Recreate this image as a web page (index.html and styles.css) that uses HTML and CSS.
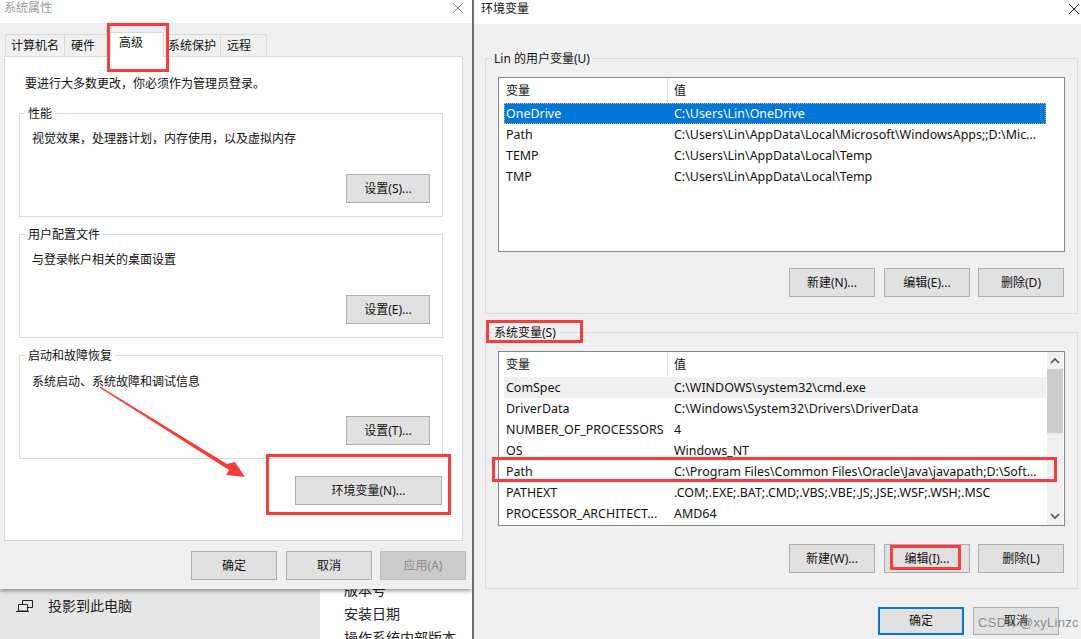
FILE: index.html
```html
<!DOCTYPE html>
<html lang="zh">
<head>
<meta charset="utf-8">
<title>环境变量</title>
<link rel="stylesheet" href="styles.css">
</head>
<body>
<div class="desktop">
  <div class="nav-pane">
    <div class="nav-item">
      <svg class="nav-icon" width="17" height="13" viewBox="0 0 17 13"><path d="M6.5 4V.5h10v7h-5M2.5 4.5h9v6.5h-9zM0 11.5h13" fill="none" stroke="#222" stroke-width="1"/></svg>
      <span>投影到此电脑</span>
    </div>
  </div>
  <div class="info-pane">
    <div class="info-line">版本号</div>
    <div class="info-line">安装日期</div>
    <div class="info-line">操作系统内部版本</div>
  </div>

  <section class="window window-props">
    <header class="titlebar titlebar-dim">
      <span>系统属性</span>
      <svg class="close" width="12" height="12" viewBox="0 0 12 12"><path d="M1 1l10 10M11 1L1 11" stroke="#8c8c8c" fill="none"/></svg>
    </header>
    <div class="props-body">
      <nav class="tabs">
        <div class="tab tab-a">计算机名</div>
        <div class="tab tab-b">硬件</div>
        <div class="tab tab-c tab-active">高级</div>
        <div class="tab tab-d">系统保护</div>
        <div class="tab tab-b">远程</div>
      </nav>
      <div class="page">
        <p class="note">要进行大多数更改，你必须作为管理员登录。</p>
        <fieldset class="group">
          <legend>性能</legend>
          <p class="group-text">视觉效果，处理器计划，内存使用，以及虚拟内存</p>
          <button class="btn btn-set">设置(S)...</button>
        </fieldset>
        <fieldset class="group">
          <legend>用户配置文件</legend>
          <p class="group-text">与登录帐户相关的桌面设置</p>
          <button class="btn btn-set">设置(E)...</button>
        </fieldset>
        <fieldset class="group group-last">
          <legend>启动和故障恢复</legend>
          <p class="group-text">系统启动、系统故障和调试信息</p>
          <button class="btn btn-set">设置(T)...</button>
        </fieldset>
        <button class="btn btn-env">环境变量(N)...</button>
      </div>
      <footer class="props-footer">
        <button class="btn">确定</button>
        <button class="btn">取消</button>
        <button class="btn btn-disabled">应用(A)</button>
      </footer>
    </div>
  </section>

  <section class="window window-env">
    <header class="titlebar titlebar-env">
      <span>环境变量</span>
      <svg class="close" width="12" height="12" viewBox="0 0 12 12"><path d="M1 1l10 10M11 1L1 11" stroke="#222" fill="none"/></svg>
    </header>
    <div class="env-body">
      <fieldset class="env-group env-user">
        <legend>Lin 的用户变量(U)</legend>
        <div class="list">
          <div class="list-main">
            <div class="row row-head"><span class="c1">变量</span><span class="c2">值</span></div>
            <div class="row row-selected"><span class="c1">OneDrive</span><span class="c2">C:\Users\Lin\OneDrive</span></div>
            <div class="row"><span class="c1">Path</span><span class="c2">C:\Users\Lin\AppData\Local\Microsoft\WindowsApps;;D:\Mic...</span></div>
            <div class="row"><span class="c1">TEMP</span><span class="c2">C:\Users\Lin\AppData\Local\Temp</span></div>
            <div class="row"><span class="c1">TMP</span><span class="c2">C:\Users\Lin\AppData\Local\Temp</span></div>
          </div>
          <div class="scroll-slot"></div>
        </div>
        <div class="actions">
          <button class="btn">新建(N)...</button>
          <button class="btn">编辑(E)...</button>
          <button class="btn">删除(D)</button>
        </div>
      </fieldset>
      <fieldset class="env-group env-system">
        <legend>系统变量(S)</legend>
        <div class="list">
          <div class="list-main">
            <div class="row row-head"><span class="c1">变量</span><span class="c2">值</span></div>
            <div class="row row-shaded"><span class="c1">ComSpec</span><span class="c2">C:\WINDOWS\system32\cmd.exe</span></div>
            <div class="row"><span class="c1">DriverData</span><span class="c2">C:\Windows\System32\Drivers\DriverData</span></div>
            <div class="row"><span class="c1">NUMBER_OF_PROCESSORS</span><span class="c2">4</span></div>
            <div class="row"><span class="c1">OS</span><span class="c2">Windows_NT</span></div>
            <div class="row"><span class="c1">Path</span><span class="c2">C:\Program Files\Common Files\Oracle\Java\javapath;D:\Soft...</span></div>
            <div class="row"><span class="c1">PATHEXT</span><span class="c2">.COM;.EXE;.BAT;.CMD;.VBS;.VBE;.JS;.JSE;.WSF;.WSH;.MSC</span></div>
            <div class="row"><span class="c1">PROCESSOR_ARCHITECT...</span><span class="c2">AMD64</span></div>
          </div>
          <div class="scroll-slot scrollbar">
            <svg class="chevron" width="16" height="17" viewBox="0 0 16 17"><path d="M4 11l4-4 4 4" fill="none" stroke="#505050" stroke-width="1.6"/></svg>
            <div class="thumb"></div>
            <svg class="chevron" width="16" height="17" viewBox="0 0 16 17"><path d="M4 6l4 4 4-4" fill="none" stroke="#505050" stroke-width="1.6"/></svg>
          </div>
        </div>
        <div class="actions">
          <button class="btn">新建(W)...</button>
          <button class="btn">编辑(I)...</button>
          <button class="btn">删除(L)</button>
        </div>
      </fieldset>
      <footer class="env-footer">
        <button class="btn btn-default">确定</button>
        <button class="btn">取消</button>
      </footer>
    </div>
  </section>

  <svg class="arrow" width="160" height="100" viewBox="0 0 160 100"><polygon points="0,7 1,7 127,84 135,82 145,97 126,95 129,90 0,8" fill="#f73c3c"/></svg>
  <div class="mark mark-tab"></div>
  <div class="mark mark-env"></div>
  <div class="mark mark-legend"></div>
  <div class="mark mark-path"></div>
  <div class="mark mark-edit"></div>
  <div class="watermark">CSDN @xyLinzc</div>
</div>
</body>
</html>
```
FILE: styles.css
```css
* { box-sizing: border-box; }
html, body { margin: 0; padding: 0; }
body { font-family: "Noto Sans", "Noto Sans CJK SC", sans-serif; font-size: 12px; line-height: 16px; color: #111; }
p { margin: 0; }

.desktop { position: relative; display: flex; width: 1081px; height: 639px; overflow: hidden; background: #fff; }
.nav-pane { width: 320px; background: #e6e6e6; padding: 594px 0 0 16px; }
.nav-item { display: flex; align-items: center; gap: 15px; font-size: 14px; line-height: 24px; height: 24px; color: #222; }
.nav-icon { flex: none; }
.info-pane { flex: 1; padding: 578px 0 0 24px; font-size: 14px; line-height: 24px; color: #222; }

.window { position: absolute; top: 0; height: 100%; }
.window-props { left: 0; width: 472px; height: 589px; box-shadow: 0 1px 5px rgba(0, 0, 0, .55); background: #f0f0f0; }
.window-env { left: 472px; width: 609px; border-left: 2px solid #6e6e6e; background: #f0f0f0; }

.titlebar { display: flex; align-items: center; justify-content: space-between; background: #fff; }
.titlebar-dim { height: 23px; padding: 0 8px 7px 4px; color: #9a9a9a; }
.titlebar-env { height: 24px; padding: 0 1px 7px 7px; color: #111; }

.props-body { padding: 11px 9px 0 4px; }
.tabs { display: flex; align-items: flex-end; height: 22px; padding-left: 1px; }
.tab { height: 22px; border: 1px solid #d9d9d9; border-bottom: 0; margin-right: -1px; background: #f0f0f0; line-height: 21px; padding-left: 6px; }
.tab-a { width: 60px; padding-left: 5px; }
.tab-b { width: 47px; }
.tab-c { width: 54px; }
.tab-d { width: 58px; padding-left: 4px; }
.tab-active { position: relative; height: 25px; margin-bottom: -1px; background: #fff; line-height: 20px; padding-left: 8px; z-index: 1; }

.page { display: flex; flex-direction: column; height: 485px; padding: 19px 20px 0 14px; border: 1px solid #d9d9d9; background: #fff; }
.note { margin-left: 6px; margin-bottom: 12px; }

.group { display: flex; flex-direction: column; width: 424px; height: 113px; margin: 0 0 8px; padding: 9px 12px 0; border: 1px solid #dcdcdc; }
.group legend { padding: 2px 3px 0; margin-left: -7px; }
.group-text { height: 16px; }
.group-last .group-text { margin-top: 1px; }
.group-last .btn-set { margin-top: 26px; }

.btn { height: 29px; padding: 0; border: 1px solid #adadad; background: #e1e1e1; font: inherit; color: #111; width: 86px; }
.btn-set { align-self: flex-end; width: 84px; margin-top: 27px; }
.btn-env { align-self: flex-end; width: 147px; margin-top: 9px; }
.btn-disabled { margin-left: -1px; background: #cccccc; border-color: #bfbfbf; color: #8a8a8a; }
.btn-default { border: 2px solid #0078d7; }

.props-footer { display: flex; justify-content: flex-end; gap: 9px; padding: 10px 0 0; margin-right: -3px; }

.env-body { padding: 25px 3px 0 11px; }
.env-group { width: 593px; margin: 0 0 9px; padding: 10px 12px 0; border: 1px solid #dcdcdc; }
.env-group legend { padding: 2px 2px 0; margin-left: -6px; }
.env-user { height: 265px; }
.env-system { height: 266px; margin-bottom: 18px; }

.list { display: flex; height: 175px; padding-left: 5px; border: 1px solid #828790; background: #fff; overflow: hidden; }
.list-main { flex: 1; margin-right: 1px; }
.scroll-slot { flex: none; width: 16px; margin-right: 1px; }
.scrollbar { display: flex; flex-direction: column; background: #f0f0f0; }
.chevron { flex: none; display: block; }
.thumb { height: 64px; margin-bottom: auto; background: #cdcdcd; }

.row { display: flex; align-items: center; height: 21px; white-space: nowrap; font-size: 12.45px; }
.row-head { height: 25px; font-size: 12px; }
.row-head .c1 { border-right: 1px solid #e5e5e5; height: 25px; line-height: 25px; }
.row-selected { background: #0078d7; color: #fff; outline: 1px dotted #f2a65a; outline-offset: -1px; }
.row-shaded { background: #f0f0f0; }
.c1 { flex: none; width: 164px; padding-left: 2px; overflow: hidden; }
.c2 { padding-left: 6px; }

.actions { display: flex; gap: 9px; margin-top: 16px; padding-left: 291px; }
.actions .btn:last-child { margin-left: -1px; }
.env-system .actions { margin-top: 18px; }
.env-footer { display: flex; gap: 9px; padding-left: 393px; }
.env-footer .btn { height: 28px; }

.arrow { position: absolute; left: 100px; top: 380px; }
.mark { position: absolute; border: 3px solid #ff3b3b; }
.mark-tab { left: 107px; top: 23px; width: 62px; height: 49px; }
.mark-env { left: 266px; top: 454px; width: 185px; height: 61px; }
.mark-legend { left: 486px; top: 320px; width: 97px; height: 23px; }
.mark-path { left: 492px; top: 457px; width: 565px; height: 25px; }
.mark-edit { left: 890px; top: 545px; width: 71px; height: 25px; }
.watermark { position: absolute; left: 978px; top: 615px; white-space: nowrap; color: rgba(110, 110, 110, .75); letter-spacing: .3px; font-family: "Liberation Sans", sans-serif; font-size: 13px; }
```
